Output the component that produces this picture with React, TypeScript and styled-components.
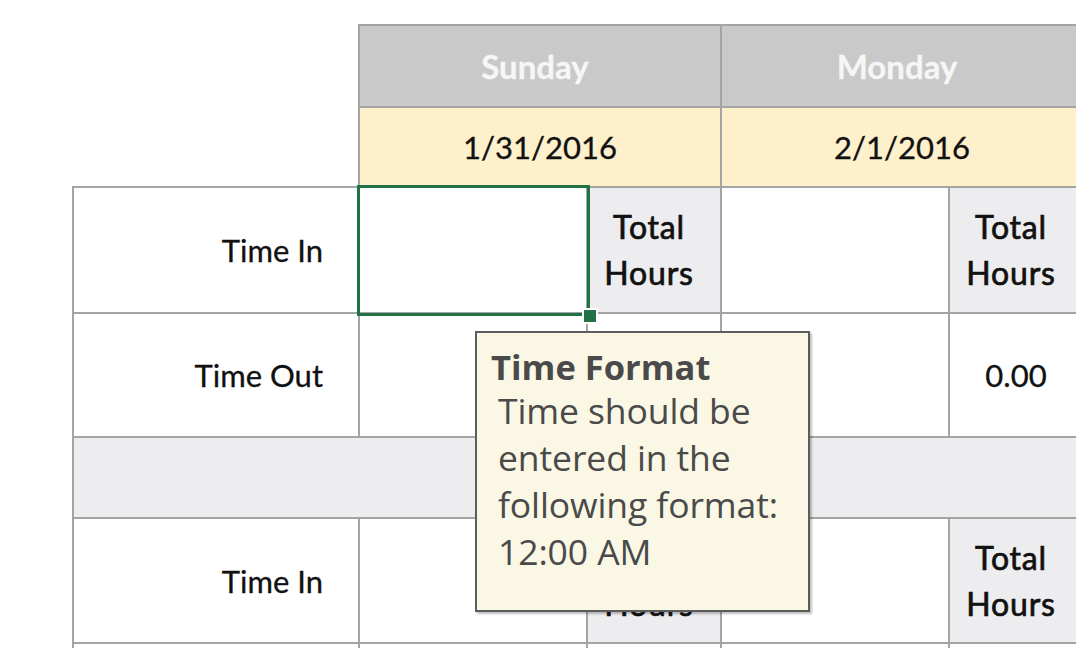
import React from 'react'
import styled, {createGlobalStyle} from 'styled-components'

const GlobalStyle = createGlobalStyle`
  html, body {
    margin: 0;
    padding: 0;
    background: #ffffff;
    overflow: hidden;
  }
`

const LINE = '#a4a4a4'

type Day = {
  name: string
  date: string
}

type Row = {
  label: string
  kind: 'in' | 'out'
}

const days: Day[] = [
  {name: 'Sunday', date: '1/31/2016'},
  {name: 'Monday', date: '2/1/2016'}
]

function DayTotal({kind}: {kind: Row['kind']}) {
  if (kind === 'in') {
    return (
      <TotalCell>
        Total
        <br />
        Hours
      </TotalCell>
    )
  }
  return <Cell $align="center">0.00</Cell>
}

function TimeBlock({rows, selected}: {rows: Row[]; selected?: boolean}) {
  return (
    <>
      {rows.map((row, i) => (
        <React.Fragment key={row.label + i}>
          <Cell $align="right">{row.label}</Cell>
          {days.map((day, d) => (
            <React.Fragment key={day.name}>
              <InputCell>
                {selected && i === 0 && d === 0 && (
                  <>
                    <Selection>
                      <FillHandle />
                    </Selection>
                    <InputMessage>
                      <MessageTitle>Time Format</MessageTitle>
                      <MessageBody>
                        Time should be
                        <br />
                        entered in the
                        <br />
                        following format:
                        <br />
                        12:00 AM
                      </MessageBody>
                    </InputMessage>
                  </>
                )}
              </InputCell>
              <DayTotal kind={row.kind} />
            </React.Fragment>
          ))}
        </React.Fragment>
      ))}
    </>
  )
}

export default function App() {
  return (
    <Sheet>
      <GlobalStyle />
      <HeaderGrid>
        {days.map((day) => (
          <DayName key={day.name}>{day.name}</DayName>
        ))}
        {days.map((day) => (
          <DateCell key={day.date}>{day.date}</DateCell>
        ))}
      </HeaderGrid>
      <BodyGrid>
        <TimeBlock
          selected
          rows={[
            {label: 'Time In', kind: 'in'},
            {label: 'Time Out', kind: 'out'}
          ]}
        />
        <BreakRow />
        <TimeBlock
          rows={[
            {label: 'Time In', kind: 'in'},
            {label: 'Time Out', kind: 'out'}
          ]}
        />
      </BodyGrid>
    </Sheet>
  )
}

const Sheet = styled.div`
  width: 1076px;
  height: 648px;
  overflow: hidden;
  box-sizing: border-box;
  padding: 24px 0 0 72px;
  font-family: Lato, 'Liberation Sans', sans-serif;
  color: #111111;
  -webkit-text-stroke: 0.3px currentColor;
`

const HeaderGrid = styled.div`
  margin-left: 286px;
  display: grid;
  grid-template-columns: 360px 360px;
  grid-template-rows: 80px 78px;
  gap: 2px;
  padding: 2px 2px 0 2px;
  width: max-content;
  background: ${LINE};
`

const DayName = styled.div`
  display: flex;
  align-items: center;
  justify-content: center;
  padding-right: 10px;
  background: #c9c9c9;
  color: #f6f6f6;
  font-size: 33px;
  font-weight: 700;
`

const DateCell = styled.div`
  display: flex;
  align-items: center;
  justify-content: center;
  background: #fdf0cb;
  font-size: 31px;
`

const BodyGrid = styled.div`
  display: grid;
  grid-template-columns: 284px 226px 132px 226px 132px;
  grid-template-rows: 124px 122px 79px 123px 124px;
  gap: 2px;
  padding: 2px;
  width: max-content;
  background: ${LINE};
`

const Cell = styled.div<{$align: 'right' | 'center'}>`
  display: flex;
  align-items: center;
  justify-content: ${(p) => (p.$align === 'right' ? 'flex-end' : 'center')};
  padding-right: ${(p) => (p.$align === 'right' ? '35px' : '0')};
  background: #ffffff;
  font-size: 31px;
`

const TotalCell = styled.div`
  display: flex;
  align-items: center;
  justify-content: center;
  padding-right: 10px;
  text-align: center;
  background: #edecee;
  font-size: 32px;
  letter-spacing: 0.8px;
  -webkit-text-stroke: 0.7px currentColor;
  line-height: 46px;
`

const InputCell = styled.div`
  position: relative;
  background: #ffffff;
`

const BreakRow = styled.div`
  grid-column: 1 / -1;
  background: #edecee;
`

const Selection = styled.div`
  position: absolute;
  top: -3px;
  left: -3px;
  right: -4px;
  bottom: -4px;
  border: 3px solid #217346;
  z-index: 2;
`

const FillHandle = styled.div`
  position: absolute;
  right: -11px;
  bottom: -11px;
  width: 12px;
  height: 12px;
  background: #217346;
  border: 2px solid #ffffff;
`

const InputMessage = styled.div`
  position: absolute;
  left: 115px;
  top: 143px;
  width: 335px;
  height: 281px;
  border: 2px solid #5c5c5c;
  background: #fbf7e5;
  box-shadow: 2px 2px 2px rgba(0, 0, 0, 0.25);
  z-index: 5;
  padding: 14px 14px;
  box-sizing: border-box;
  font-family: 'Open Sans', 'Noto Sans', sans-serif;
  color: #4a4a4a;
  -webkit-text-stroke: 0;
`

const MessageTitle = styled.div`
  font-size: 34.5px;
  font-weight: 700;
  line-height: 40px;
`

const MessageBody = styled.div`
  margin-left: 7px;
  font-size: 35.5px;
  line-height: 47px;
  letter-spacing: -0.1px;
  white-space: nowrap;
`
